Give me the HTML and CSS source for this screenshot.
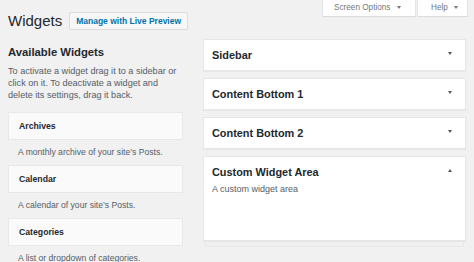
FILE: index.html
```html
<!DOCTYPE html>
<html>
<head>
    <title>Widgets</title>
    <link rel="stylesheet" href="styles.css">
</head>
<body>
    <div class="wrap">
        <div class="header">
            <div class="title-row">
                <h1>Widgets</h1>
                <a class="preview-btn">Manage with Live Preview</a>
            </div>
            <div class="meta-links">
                <div class="meta-tab tab-options">Screen Options <span class="caret"></span></div>
                <div class="meta-tab tab-help">Help <span class="caret"></span></div>
            </div>
        </div>

        <div class="columns">
            <div class="available">
                <h2>Available Widgets</h2>
                <p class="intro">To activate a widget drag it to a sidebar or click on it. To deactivate a widget and delete its settings, drag it back.</p>

                <div class="widget">Archives</div>
                <p class="widget-desc">A monthly archive of your site’s Posts.</p>

                <div class="widget">Calendar</div>
                <p class="widget-desc">A calendar of your site’s Posts.</p>

                <div class="widget">Categories</div>
                <p class="widget-desc">A list or dropdown of categories.</p>
            </div>

            <div class="sidebars">
                <div class="sidebar">
                    <div class="sidebar-head">Sidebar <span class="caret"></span></div>
                </div>
                <div class="sidebar">
                    <div class="sidebar-head">Content Bottom 1 <span class="caret"></span></div>
                </div>
                <div class="sidebar">
                    <div class="sidebar-head">Content Bottom 2 <span class="caret"></span></div>
                </div>
                <div class="sidebar open">
                    <div class="sidebar-head">Custom Widget Area <span class="caret up"></span></div>
                    <p class="sidebar-desc">A custom widget area</p>
                </div>
                <div class="drop-zone"></div>
            </div>
        </div>
    </div>
</body>
</html>
```

FILE: styles.css
```css
body {
    margin: 0;
    padding: 0;
    width: 474px;
    height: 262px;
    background: #f1f1f1;
    font-family: "Liberation Sans", Arial, sans-serif;
    color: #23282d;
    overflow: hidden;
}
.wrap {
    padding: 0 8px;
}
.header {
    display: flex;
    justify-content: space-between;
    align-items: flex-start;
    height: 39px;
}
.title-row {
    display: flex;
    align-items: center;
    gap: 7px;
    padding-top: 12px;
}
h1 {
    margin: 0;
    font-size: 15px;
    font-weight: 400;
    line-height: 18px;
}
.preview-btn {
    display: block;
    height: 16px;
    line-height: 16px;
    padding: 0 6px;
    border: 1px solid #dcdcdc;
    border-radius: 2px;
    background: #f7f7f7;
    color: #0073aa;
    font-size: 8.5px;
    font-weight: 700;
}
.meta-links {
    display: flex;
    gap: 3px;
    margin-right: -1px;
}
.meta-tab {
    height: 16px;
    line-height: 15px;
    background: #fff;
    box-shadow: 0 0 0 1px rgba(0, 0, 0, 0.04), 0 1px 1px rgba(0, 0, 0, 0.05);
    color: #72777c;
    font-size: 8.2px;
}
.tab-options {
    width: 92px;
    padding-left: 11px;
    box-sizing: border-box;
}
.tab-help {
    width: 49px;
    padding-left: 13px;
    box-sizing: border-box;
}
.meta-tab .caret {
    margin-left: 4px;
    vertical-align: 1px;
}
.caret {
    display: inline-block;
    width: 0;
    height: 0;
    border-left: 2.5px solid transparent;
    border-right: 2.5px solid transparent;
    border-top: 3px solid #72777c;
}
.caret.up {
    border-top: 0;
    border-bottom: 3px solid #72777c;
}
.columns {
    display: flex;
    gap: 20px;
}
.available {
    width: 175px;
    flex-shrink: 0;
    padding-top: 6px;
}
h2 {
    margin: 0;
    font-size: 11.3px;
    font-weight: 700;
    line-height: 14px;
}
.intro {
    margin: 6px 0 11px 0;
    font-size: 9.1px;
    line-height: 12px;
    color: #555d66;
}
.widget {
    height: 28px;
    line-height: 27px;
    padding: 0 10px;
    background: #fafafa;
    border: 1px solid #e8e8e8;
    box-sizing: border-box;
    font-size: 8.7px;
    font-weight: 700;
}
.widget-desc {
    margin: 6px 0 7px 0;
    padding: 0 10px;
    font-size: 8.6px;
    line-height: 12px;
    color: #555d66;
}
.sidebars {
    width: 263px;
    flex-shrink: 0;
    display: flex;
    flex-direction: column;
    gap: 7px;
}
.sidebar {
    background: #fff;
    border: 1px solid #e6e6e6;
    box-shadow: 0 1px 1px rgba(0, 0, 0, 0.04);
}
.sidebar-head {
    display: flex;
    justify-content: space-between;
    align-items: center;
    height: 30px;
    padding: 0 13px 0 8px;
    font-size: 10.9px;
    font-weight: 700;
}
.sidebar-head .caret {
    border-top-color: #555;
    margin-bottom: 3px;
}
.sidebar-head .caret.up {
    border-bottom-color: #555;
}
.sidebar.open {
    height: 85px;
    box-sizing: border-box;
}
.sidebar-desc {
    margin: -4px 0 0 0;
    padding: 0 8px;
    font-size: 9px;
    line-height: 12px;
    color: #555d66;
}
.drop-zone {
    height: 4px;
    margin: -6px 2px 0 2px;
    border: 1px solid #e8e8e8;
    border-top: 0;
}
```
